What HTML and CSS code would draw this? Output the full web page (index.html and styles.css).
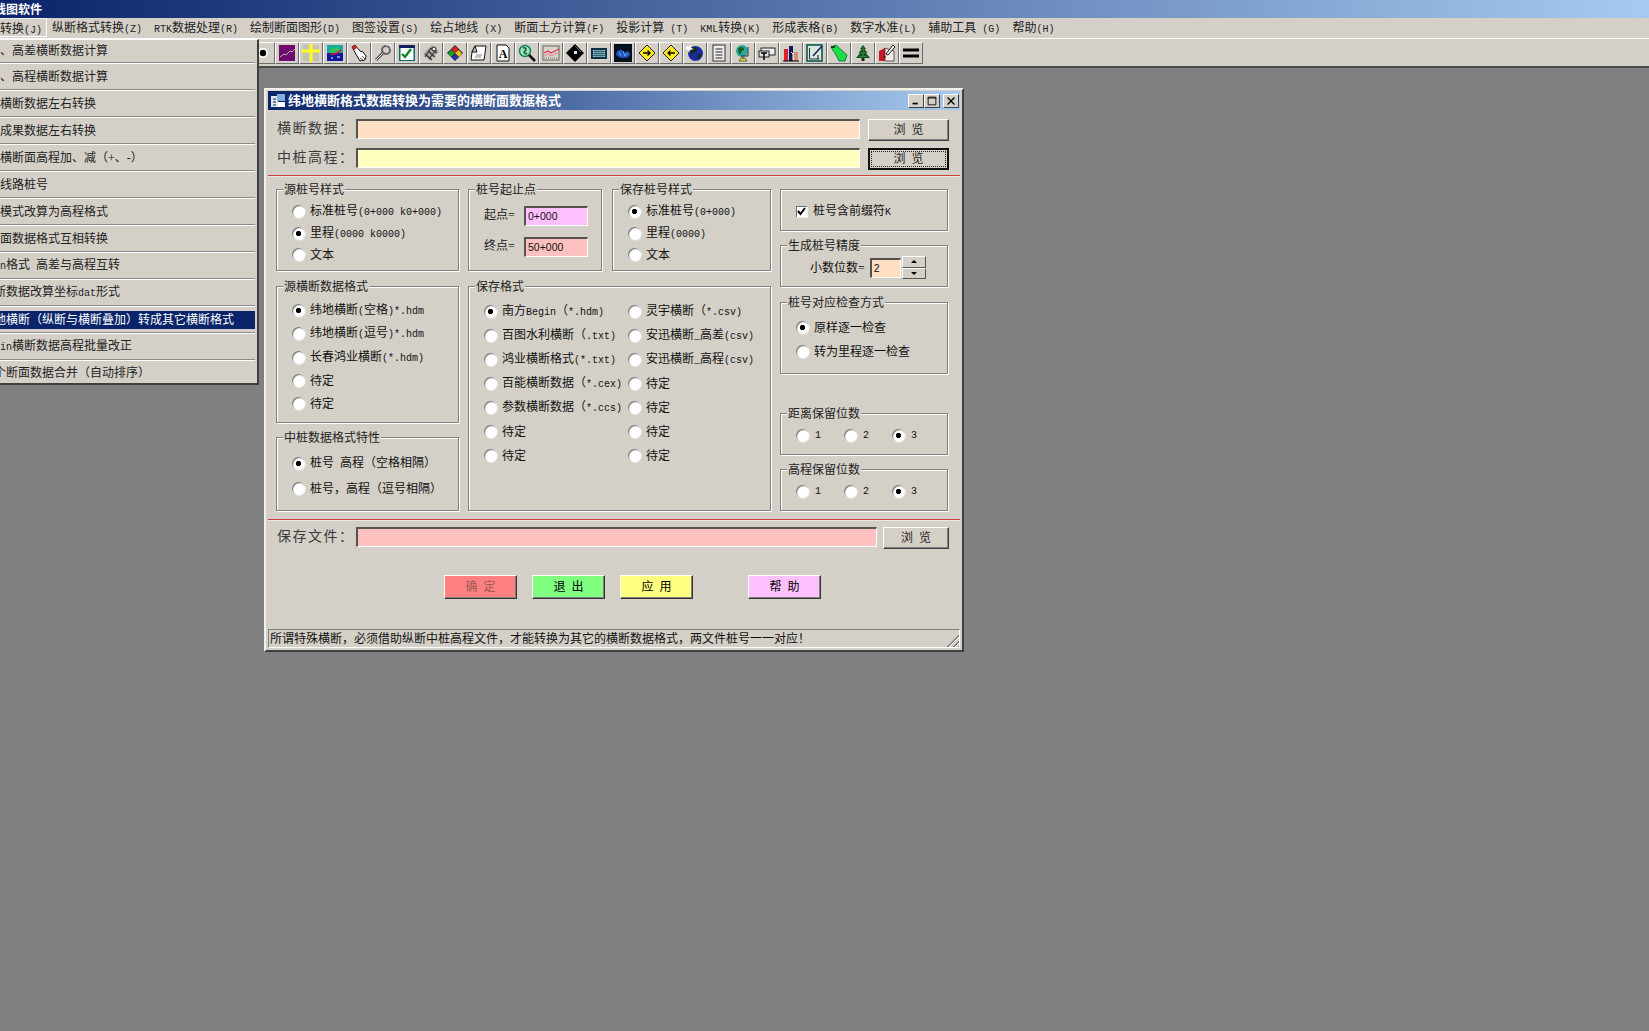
FILE: index.html
```html
<!DOCTYPE html>
<html lang="zh-CN">
<head>
<meta charset="utf-8">
<title>纬地横断格式数据转换</title>
<link rel="stylesheet" href="styles.css">
</head>
<body>
<div class="app">
  <div class="apptitle">线图软件</div>
  <nav class="menubar">
    <span class="menuitem open">转换<i>(J)</i></span>
    <span class="menuitem">纵断格式转换<i>(Z)</i></span>
    <span class="menuitem"><i>RTK</i>数据处理<i>(R)</i></span>
    <span class="menuitem">绘制断面图形<i>(D)</i></span>
    <span class="menuitem">图签设置<i>(S)</i></span>
    <span class="menuitem">绘占地线<i>&nbsp;(X)</i></span>
    <span class="menuitem">断面土方计算<i>(F)</i></span>
    <span class="menuitem">投影计算<i>&nbsp;(T)</i></span>
    <span class="menuitem"><i>KML</i>转换<i>(K)</i></span>
    <span class="menuitem">形成表格<i>(B)</i></span>
    <span class="menuitem">数字水准<i>(L)</i></span>
    <span class="menuitem">辅助工具<i>&nbsp;(G)</i></span>
    <span class="menuitem">帮助<i>(H)</i></span>
  </nav>
  <div class="toolbar">
    <span class="tool"><svg viewBox="0 0 18 18"><circle cx="9" cy="9" r="5" fill="#fff"/><circle cx="9" cy="9" r="3.2" fill="#000"/></svg></span>
    <span class="tool"><svg viewBox="0 0 18 18"><rect x="1" y="1" width="16" height="16" fill="#6e0a6e"/><path d="M2 13l4-3 2 1 4-4 2 1 3-3" fill="none" stroke="#b9b0b9" stroke-width="1"/></svg></span>
    <span class="tool"><svg viewBox="0 0 18 18"><rect x="1" y="1" width="16" height="16" fill="#c4c2b4"/><path d="M9 0v18M0 7h18" stroke="#ffff1e" stroke-width="3"/></svg></span>
    <span class="tool"><svg viewBox="0 0 18 18"><rect x="1" y="1" width="16" height="8" fill="#18a8a8"/><rect x="1" y="9" width="16" height="8" fill="#1018a0"/><path d="M3 6c4-4 9-4 12 0l-2 3H5z" fill="#30c060"/><path d="M4 10c4 1 8-1 11-4" fill="none" stroke="#e01030" stroke-width="1.6"/><path d="M5 14h2M11 13h3" stroke="#fff"/></svg></span>
    <span class="tool"><svg viewBox="0 0 18 18"><path d="M2 3l3-2 5 6 3 1 3 4-1 4-5 1-3-5z" fill="#fff" stroke="#111"/><path d="M2 3l3-2 2 3-3 2z" fill="#d02020"/><path d="M10 14l3 2M12 12l3 3" stroke="#555"/></svg></span>
    <span class="tool"><svg viewBox="0 0 18 18"><path d="M2 16l8-8" stroke="#555" stroke-width="3"/><path d="M2 16l8-8" stroke="#eee" stroke-width="1"/><circle cx="12" cy="6" r="4" fill="none" stroke="#666" stroke-width="2"/><path d="M12 1h5v4" fill="none" stroke="#eee"/></svg></span>
    <span class="tool"><svg viewBox="0 0 18 18"><rect x="1" y="1" width="16" height="16" fill="#0c6a60"/><rect x="2.500" y="4" width="13" height="12" fill="#fff"/><rect x="1" y="1" width="16" height="3" fill="#102060"/><path d="M4 10l3 3 6-8" fill="none" stroke="#0a8a20" stroke-width="2.400"/></svg></span>
    <span class="tool"><svg viewBox="0 0 18 18"><path d="M1 10l9-9 7 6-9 10z" fill="#a8a8a0"/><path d="M3 10l7 6M6 7l7 6M9 4l6 5M3 13l6-9M7 15l7-9" stroke="#333" stroke-width="1.100"/><circle cx="12" cy="5" r="2" fill="#eee" stroke="#222"/></svg></span>
    <span class="tool"><svg viewBox="0 0 18 18"><path d="M1 9l8-8 8 8-8 8z" fill="#222"/><path d="M9 2l3.500 3.500L9 9 5.500 5.500z" fill="#e02020"/><path d="M5 6l4 3-4 4-3-3.500z" fill="#18a028"/><path d="M13 6l3 3.500L13 13 9 9z" fill="#e8c020"/><path d="M9 10l3.500 3.500L9 16l-3-2.500z" fill="#2030c0"/></svg></span>
    <span class="tool"><svg viewBox="0 0 18 18"><path d="M5 2h11l-2 14H1l1-8z" fill="#fff" stroke="#111"/><path d="M5 2L2 8h5z" fill="#ccc" stroke="#111"/><path d="M6 11h6M5 13h6" stroke="#888"/></svg></span>
    <span class="tool"><svg viewBox="0 0 18 18"><path d="M3 1h9l3 3v13H3z" fill="#fff" stroke="#111"/><text x="9" y="14" class="glyph">A</text></svg></span>
    <span class="tool"><svg viewBox="0 0 18 18"><circle cx="7" cy="7" r="5.500" fill="#a8e8a0" stroke="#108070" stroke-width="1.500"/><path d="M5 4c3-1 4 2 2 3-2 1 0 4 2 2" fill="none" stroke="#0a5060" stroke-width="1.500"/><path d="M11 11l6 6" stroke="#111" stroke-width="2.500"/></svg></span>
    <span class="tool"><svg viewBox="0 0 18 18"><rect x="1" y="2" width="16" height="14" fill="#d8d4c8" stroke="#666"/><path d="M2 9l4-2 3 2 4-2 4-2" fill="none" stroke="#e03050" stroke-width="1.200"/><path d="M2 12l4-2 3 2 4-2 4-1" fill="none" stroke="#e080a0"/><path d="M2 14h14" stroke="#777" stroke-dasharray="1 1"/></svg></span>
    <span class="tool"><svg viewBox="0 0 18 18"><path d="M9 0l9 9-9 9-9-9z" fill="#000"/><path d="M8 7h3v3H8z" fill="#ddd"/><path d="M9 2l6 6" stroke="#666"/></svg></span>
    <span class="tool"><svg viewBox="0 0 18 18"><rect x="1" y="4" width="16" height="11" fill="#0e3044"/><rect x="3" y="6" width="12" height="7" fill="#a8dce0"/><path d="M3 7.500h12M3 9.500h12M3 11.500h12M5 6v7M7 6v7M9 6v7M11 6v7M13 6v7" stroke="#104050" stroke-width=".7"/></svg></span>
    <span class="tool"><svg viewBox="0 0 18 18"><rect x="0" y="0" width="18" height="18" fill="#04101c"/><path d="M2 10c1-4 4-5 6-4s2 4 4 2 3 0 4 2c-1 3-3 4-6 4S3 13 2 10z" fill="#2058c0"/><path d="M5 8l2 4M9 7l2 5M13 9l-2 3" stroke="#70a0f0"/></svg></span>
    <span class="tool"><svg viewBox="0 0 18 18"><path d="M9 1l8 8-8 8-8-8z" fill="#ffe820" stroke="#222"/><path d="M5 9h7M9.500 6.500L12 9l-2.500 2.500" fill="none" stroke="#000" stroke-width="1.300"/></svg></span>
    <span class="tool"><svg viewBox="0 0 18 18"><path d="M9 1l8 8-8 8-8-8z" fill="#ffe820" stroke="#222"/><path d="M13 9H6M8.500 6.500L6 9l2.500 2.500" fill="none" stroke="#000" stroke-width="1.300"/></svg></span>
    <span class="tool"><svg viewBox="0 0 18 18"><circle cx="9.500" cy="9.500" r="7.500" fill="#1a2ca0"/><path d="M7 3c3 0 5 2 4 4s-4 1-5 4c-2-1-3-6 1-8zM13 10c2-1 3 0 2 2s-3 3-4 2 0-3 2-4z" fill="#162a20"/><path d="M0 2l3 1 1-3 1 4 3 1-4 1-1 3-1-3-3-1z" fill="#fff"/></svg></span>
    <span class="tool"><svg viewBox="0 0 18 18"><rect x="3" y="1" width="12" height="16" fill="#eee" stroke="#333"/><path d="M5.500 5h7M5.500 8h7M5.500 11h7M5.500 14h7" stroke="#222"/></svg></span>
    <span class="tool"><svg viewBox="0 0 18 18"><circle cx="8" cy="7" r="6" fill="#28a8a0"/><path d="M4 5c2-3 6-2 6 0s-3 1-3 4-3 1-3-4z" fill="#1a5a20"/><path d="M14 3v9H7" fill="none" stroke="#333"/><path d="M9 13v2M5 17l2-3h4l2 3z" fill="#f0e020" stroke="#333" stroke-width=".7"/></svg></span>
    <span class="tool"><svg viewBox="0 0 18 18"><rect x="3" y="4" width="14" height="7" fill="#eee" stroke="#222"/><rect x="1" y="7" width="10" height="6" fill="#ddd" stroke="#222"/><path d="M3 9h6M6 9v7" stroke="#000" stroke-width="1.500"/></svg></span>
    <span class="tool"><svg viewBox="0 0 18 18"><rect x="2" y="5" width="4" height="12" fill="#d82030"/><rect x="7" y="2" width="4" height="15" fill="#101860"/><rect x="12" y="8" width="4" height="9" fill="#d88a70"/><path d="M1 17h16" stroke="#000"/><path d="M9 8l2 2v6" stroke="#fff"/></svg></span>
    <span class="tool"><svg viewBox="0 0 18 18"><rect x="1" y="1" width="15" height="16" fill="#d8e8e0" stroke="#0c5a50" stroke-width="1.600"/><path d="M3.500 4v11h10" fill="none" stroke="#333"/><path d="M7 12L16 2" stroke="#102060" stroke-width="1.500"/><path d="M12 11v4" stroke="#111"/></svg></span>
    <span class="tool"><svg viewBox="0 0 18 18"><path d="M1 3l5-2 11 10-2 6-6 0-3-6z" fill="#18e040" stroke="#064" stroke-width=".8"/><path d="M1 3l4 0" stroke="#111" stroke-width="1.500"/></svg></span>
    <span class="tool"><svg viewBox="0 0 18 18"><path d="M9 1l3 4h-1.500l3 4H12l4 5H2l4-5H4.500l3-4H6z" fill="#0e5020"/><path d="M9 3v10M6 8l3 2 3-2M5 12l4 1 4-1" stroke="#3a8a40" fill="none"/><rect x="7.500" y="14" width="3" height="3" fill="#222"/></svg></span>
    <span class="tool"><svg viewBox="0 0 18 18"><path d="M1 7l6-3v13H1z" fill="#c81828"/><path d="M7 4l9 3v10H7z" fill="#f4ece8" stroke="#222" stroke-width=".7"/><path d="M8 10l7-9 2 2-7 8z" fill="#fff" stroke="#111"/><path d="M5 13h3" stroke="#222"/></svg></span>
    <span class="tool"><svg viewBox="0 0 18 18"><path d="M1 6h16M1 12h16" stroke="#000" stroke-width="3"/></svg></span>
  </div>
  <main class="mdi"></main>
</div>

<div class="dropdown">
  <div class="ddrow"><span class="ddtext">、高差横断数据计算</span></div>
  <div class="ddrow"><span class="ddtext">、高程横断数据计算</span></div>
  <div class="ddrow"><span class="ddtext">横断数据左右转换</span></div>
  <div class="ddrow"><span class="ddtext">成果数据左右转换</span></div>
  <div class="ddrow"><span class="ddtext">横断面高程加、减（+、-）</span></div>
  <div class="ddrow"><span class="ddtext">线路桩号</span></div>
  <div class="ddrow"><span class="ddtext">模式改算为高程格式</span></div>
  <div class="ddrow"><span class="ddtext">面数据格式互相转换</span></div>
  <div class="ddrow"><span class="ddtext"><i>n</i>格式<i>&nbsp;</i>高差与高程互转</span></div>
  <div class="ddrow"><span class="ddtext shift">断数据改算坐标<i>dat</i>形式</span></div>
  <div class="ddrow active"><span class="ddtext"><b class="shift">地横断（纵断与横断叠加）转成其它横断格式</b></span></div>
  <div class="ddrow"><span class="ddtext"><i>in</i>横断数据高程批量改正</span></div>
  <div class="ddrow"><span class="ddtext shift">个断面数据合并（自动排序）</span></div>
</div>

<section class="dialog">
  <header class="dtitle">
    <svg class="dicon" viewBox="0 0 16 16"><rect x="1" y="3" width="7" height="11" fill="#dfe8f0"/><rect x="7" y="1" width="8" height="7" fill="#7fb0d8"/><rect x="8" y="9" width="7" height="5" fill="#fff"/><path d="M3 6h3M3 9h3M3 12h3" stroke="#123"/></svg>
    <span class="dtext">纬地横断格式数据转换为需要的横断面数据格式</span>
    <span class="capbtns">
      <span class="capbtn"><svg viewBox="0 0 16 14"><path d="M4 10h6" stroke="#000" stroke-width="2"/></svg></span>
      <span class="capbtn"><svg viewBox="0 0 16 14"><path d="M3.500 2.500h9v9h-9zM3 3.500h10" fill="none" stroke="#000"/></svg></span>
      <span class="capbtn closebtn"><svg viewBox="0 0 16 14"><path d="M4 3l8 8M12 3l-8 8" stroke="#000" stroke-width="1.600"/></svg></span>
    </span>
  </header>

  <div class="filerow first">
    <label class="flabel">横断数据：</label>
    <input class="field peach wide" type="text">
    <button class="btn browse">浏 览</button>
  </div>
  <div class="filerow second">
    <label class="flabel">中桩高程：</label>
    <input class="field lemon wide" type="text">
    <button class="btn browse focus"><span class="focusbox">浏 览</span></button>
  </div>
  <div class="redline top"></div>

  <div class="panels">
    <div class="col cola">
      <div class="group g82 rows22">
        <span class="legend">源桩号样式</span>
        <div class="opt"><span class="radio"></span><span>标准桩号<i>(0+000 k0+000)</i></span></div>
        <div class="opt"><span class="radio on"></span><span>里程<i>(0000 k0000)</i></span></div>
        <div class="opt"><span class="radio"></span><span>文本</span></div>
      </div>
      <div class="group g137 rows23">
        <span class="legend">源横断数据格式</span>
        <div class="opt"><span class="radio on"></span><span>纬地横断<i>(</i>空格<i>)*.hdm</i></span></div>
        <div class="opt"><span class="radio"></span><span>纬地横断<i>(</i>逗号<i>)*.hdm</i></span></div>
        <div class="opt"><span class="radio"></span><span>长春鸿业横断<i>(*.hdm)</i></span></div>
        <div class="opt"><span class="radio"></span><span>待定</span></div>
        <div class="opt"><span class="radio"></span><span>待定</span></div>
      </div>
      <div class="group g74 rows25">
        <span class="legend">中桩数据格式特性</span>
        <div class="opt"><span class="radio on"></span><span>桩号<i>&nbsp;</i>高程（空格相隔）</span></div>
        <div class="opt"><span class="radio"></span><span>桩号，高程（逗号相隔）</span></div>
      </div>
    </div>

    <div class="col colb">
      <div class="rowb">
        <div class="group g82 pointbox">
          <span class="legend">桩号起止点</span>
          <div class="pointrow"><span class="pointlabel">起点=</span><input class="field pink small" type="text" value="0+000"></div>
          <div class="pointrow"><span class="pointlabel">终点=</span><input class="field rose small" type="text" value="50+000"></div>
        </div>
        <div class="group g82 rows22 savestake">
          <span class="legend">保存桩号样式</span>
          <div class="opt"><span class="radio on"></span><span>标准桩号<i>(0+000)</i></span></div>
          <div class="opt"><span class="radio"></span><span>里程<i>(0000)</i></span></div>
          <div class="opt"><span class="radio"></span><span>文本</span></div>
        </div>
      </div>
      <div class="group saveformat">
        <span class="legend">保存格式</span>
        <div class="opt"><span class="radio on"></span><span>南方<i>Begin</i>（<i>*.hdm)</i></span></div>
        <div class="opt"><span class="radio"></span><span>灵宇横断（<i>*.csv)</i></span></div>
        <div class="opt"><span class="radio"></span><span>百图水利横断（<i>.txt)</i></span></div>
        <div class="opt"><span class="radio"></span><span>安迅横断<i>_</i>高差<i>(csv)</i></span></div>
        <div class="opt"><span class="radio"></span><span>鸿业横断格式<i>(*.txt)</i></span></div>
        <div class="opt"><span class="radio"></span><span>安迅横断<i>_</i>高程<i>(csv)</i></span></div>
        <div class="opt"><span class="radio"></span><span>百能横断数据（<i>*.cex)</i></span></div>
        <div class="opt"><span class="radio"></span><span>待定</span></div>
        <div class="opt"><span class="radio"></span><span>参数横断数据（<i>*.ccs)</i></span></div>
        <div class="opt"><span class="radio"></span><span>待定</span></div>
        <div class="opt"><span class="radio"></span><span>待定</span></div>
        <div class="opt"><span class="radio"></span><span>待定</span></div>
        <div class="opt"><span class="radio"></span><span>待定</span></div>
        <div class="opt"><span class="radio"></span><span>待定</span></div>
      </div>
    </div>

    <div class="col colc">
      <div class="group g42 checkgroup">
        <div class="opt"><span class="check"><svg viewBox="0 0 11 11"><path d="M2 5l2.500 3L9 2" fill="none" stroke="#000" stroke-width="2"/></svg></span><span>桩号含前缀符<i>K</i></span></div>
      </div>
      <div class="group g42 spingroup">
        <span class="legend">生成桩号精度</span>
        <div class="spinrow"><span>小数位数=</span><input class="field peach tiny" type="text" value="2">
          <span class="spin"><span class="spinbtn up"></span><span class="spinbtn down"></span></span>
        </div>
      </div>
      <div class="group g72 rows24">
        <span class="legend">桩号对应检查方式</span>
        <div class="opt"><span class="radio on"></span><span>原样逐一检查</span></div>
        <div class="opt"><span class="radio"></span><span>转为里程逐一检查</span></div>
      </div>
      <div class="group g42 digits">
        <span class="legend">距离保留位数</span>
        <div class="digitrow">
          <div class="opt"><span class="radio"></span><i>1</i></div>
          <div class="opt"><span class="radio"></span><i>2</i></div>
          <div class="opt"><span class="radio on"></span><i>3</i></div>
        </div>
      </div>
      <div class="group g42 digits">
        <span class="legend">高程保留位数</span>
        <div class="digitrow">
          <div class="opt"><span class="radio"></span><i>1</i></div>
          <div class="opt"><span class="radio"></span><i>2</i></div>
          <div class="opt"><span class="radio on"></span><i>3</i></div>
        </div>
      </div>
    </div>
  </div>

  <div class="redline bottom"></div>
  <div class="filerow save">
    <label class="flabel">保存文件：</label>
    <input class="field rose long" type="text">
    <button class="btn browse short">浏 览</button>
  </div>

  <div class="actions">
    <button class="btn action red" disabled>确 定</button>
    <button class="btn action green">退 出</button>
    <button class="btn action yellow">应 用</button>
    <button class="btn action violet">帮 助</button>
  </div>

  <footer class="status">所谓特殊横断，必须借助纵断中桩高程文件，才能转换为其它的横断数据格式，两文件桩号一一对应！<span class="grip"></span></footer>
</section>
</body>
</html>
```
FILE: styles.css
```css
* { box-sizing: border-box; }
html, body { height: 100%; }
body {
  margin: 0;
  overflow: hidden;
  background: #808080;
  color: #111;
  font: 12px/16px "Liberation Serif", "Noto Sans CJK SC", sans-serif;
}
i, b { font-style: normal; font-weight: normal; }
i { font-family: "Liberation Mono", monospace; font-size: 10px; }

.app { display: flex; flex-direction: column; height: 1031px; }
.apptitle {
  height: 18px;
  padding-left: 0;
  text-indent: -6px;
  background: linear-gradient(90deg, #0a246a, #a6caf0);
  color: #fff;
  font: bold 12px/17px "Noto Sans CJK SC", sans-serif;
  white-space: nowrap;
}
.menubar {
  display: flex;
  gap: 12px;
  height: 21px;
  padding-top: 2px;
  background: #d4d0c8;
  border-bottom: 1px solid #fff;
  line-height: 16px;
  color: #222;
  white-space: nowrap;
}
.menuitem.open {
  width: 47px;
  height: 19px;
  margin: -2px -7px 0 0;
  padding-top: 2px;
  border-right: 1px solid #fff;
  border-bottom: 1px solid #fff;
  border-top: 1px solid #eee;
}
.toolbar {
  display: flex;
  height: 29px;
  padding: 3px 0 0 251px;
  background: #d4d0c8;
  border-bottom: 2px solid #4c4c4c;
}
.tool {
  display: flex;
  align-items: center;
  justify-content: center;
  width: 24px;
  height: 22px;
  border: 1px solid;
  border-color: #fff #6c6c6c #6c6c6c #fff;
  background: #d4d0c8;
}
.tool svg { width: 18px; height: 18px; display: block; }
.glyph { font: bold 12px "Liberation Serif", serif; text-anchor: middle; fill: #000; }
.mdi { flex: 1; background: #808080; }

/* Drop-down menu lying over the toolbar */
.dropdown {
  position: absolute;
  left: 0;
  top: 39px;
  width: 259px;
  height: 346px;
  padding-right: 2px;
  background: #d4d0c8;
  border-right: 2px solid #404040;
  border-bottom: 2px solid #404040;
  border-top: 1px solid #fff;
  white-space: nowrap;
  overflow: hidden;
  color: #222;
}
.ddrow {
  display: flex;
  align-items: center;
  height: 27px;
  border-bottom: 1px solid #fff;
  box-shadow: inset 0 -1px 0 #8a8a8a;
}
.ddrow:first-child { height: 24px; padding-bottom: 2px; }
.ddrow:last-child { height: 23px; border: 0; box-shadow: none; }
.ddtext { display: block; flex: 1; line-height: 18px; }
.shift { margin-left: -6px; display: inline-block; }
.active .ddtext { background: #0a246a; color: #fff; }

/* Dialog window */
.dialog {
  position: absolute;
  left: 264px;
  top: 88px;
  width: 700px;
  height: 564px;
  display: flex;
  flex-direction: column;
  padding: 1px 2px 2px;
  background: #d4d0c8;
  border: 2px solid;
  border-color: #f2f0ea #404040 #404040 #f2f0ea;
}
.dtitle {
  display: flex;
  align-items: center;
  flex: none;
  height: 19px;
  padding: 0 1px 0 2px;
  background: linear-gradient(90deg, #0a246a, #a6caf0);
  color: #fff;
}
.dicon { width: 16px; height: 16px; flex: none; }
.dtext { margin: -2px 0 0 2px; font: bold 13px/18px "Noto Sans CJK SC", sans-serif; white-space: nowrap; }
.capbtns { display: flex; margin-left: auto; }
.capbtn {
  width: 16px;
  height: 14px;
  background: #d4d0c8;
  border: 1px solid;
  border-color: #fff #404040 #404040 #fff;
}
.capbtn svg { display: block; width: 100%; height: 100%; }
.closebtn { margin-left: 3px; }

.filerow { display: flex; flex: none; height: 22px; padding-left: 9px; }
.filerow.first { margin-top: 9px; }
.filerow.second { margin-top: 7px; }
.filerow.save { margin-top: 6px; }
.flabel {
  width: 79px;
  font: 14px/16px "Noto Sans CJK SC", sans-serif;
  letter-spacing: 1.500px;
  color: #3a3a3a;
  white-space: nowrap;
}
.field {
  display: block;
  height: 20px;
  padding: 0 0 1px 2px;
  border: 2px solid;
  border-width: 2px 1px 1px 2px;
  border-color: #55534e #fff #fff #55534e;
  border-radius: 0;
  outline: 0;
  font: 10.500px/15px "Liberation Sans", sans-serif;
  color: #111;
}
.wide { width: 504px; }
.long { width: 521px; }
.small { width: 64px; margin-left: auto; }
.tiny { width: 31px; margin-left: 5px; }
.peach { background: #ffe0c4; }
.lemon { background: #ffffc0; }
.pink { background: #ffc0ff; }
.rose { background: #ffc0c0; }

.btn {
  padding: 0;
  font: 12px/16px "Liberation Serif", "Noto Sans CJK SC", sans-serif;
  word-spacing: 3px;
  color: #222;
  background: #d4d0c8;
  border: 1px solid;
  border-color: #fff #404040 #404040 #fff;
  box-shadow: inset -1px -1px 0 #808080;
}
.browse { width: 81px; height: 22px; margin-left: 8px; }
.browse.short { width: 66px; margin-left: 6px; }
.browse.focus { border: 2px solid #111; height: 22px; box-shadow: none; }
.focusbox { display: block; height: 16px; margin: 0 1px; border: 1px dotted #222; line-height: 14px; }

.redline { flex: none; height: 2px; background: #c8403a; border-bottom: 1px solid #f0e6e0; }
.redline.top { margin-top: 5px; }
.redline.bottom { margin-top: 8px; }

.panels { display: flex; flex: none; gap: 9px; margin-top: 12px; padding-left: 8px; }
.col { display: flex; flex-direction: column; }
.cola { width: 183px; gap: 15px; }
.colb { width: 303px; gap: 15px; }
.colc { width: 168px; }
.rowb { display: flex; gap: 10px; }

.group {
  position: relative;
  border: 1px solid #808080;
  box-shadow: 1px 1px 0 #fff, inset 1px 1px 0 #fff;
  padding-left: 15px;
}
.legend {
  position: absolute;
  left: 6px;
  top: -8px;
  padding: 0 1px;
  background: #d4d0c8;
  line-height: 16px;
  color: #222;
  white-space: nowrap;
}
.opt { display: flex; align-items: center; padding-top: 1px; white-space: pre; }
.radio { margin: -1px 5px 0 0; }
.g82 { height: 82px; }
.g137 { height: 137px; }
.g74 { height: 74px; margin-top: -1px; }
.g42 { height: 42px; }
.g72 { height: 72px; }
.rows22 { padding-top: 11px; }
.rows22 .opt { height: 21.500px; }
.rows23 { padding-top: 12px; }
.rows23 .opt { height: 23.250px; }
.rows24 { padding-top: 12px; }
.rows24 .opt { height: 24px; }
.rows25 { padding-top: 13px; }
.rows25 .opt { height: 25px; }

.radio {
  flex: none;
  display: block;
  width: 13px;
  height: 13px;
  border-radius: 50%;
  background: #fff;
  box-shadow: inset 1px 1px 1px #6c6c6c, 0.500px 0.500px 1px #fff;
}
.radio.on { background: radial-gradient(circle, #000 2.300px, #fff 3px); }

.pointbox { width: 134px; padding: 16px 13px 0 15px; }
.pointrow { display: flex; align-items: center; height: 20px; color: #222; }
.pointrow + .pointrow { margin-top: 11px; }
.pointlabel { margin-top: -2px; }
.savestake { width: 159px; }
.saveformat {
  display: grid;
  grid-template-columns: 144px 1fr;
  grid-auto-rows: 24px;
  height: 225px;
  padding: 12px 0 0 15px;
}

.check {
  flex: none;
  width: 11px;
  height: 11px;
  margin-right: 6px;
  background: #fff;
  box-shadow: inset 1px 1px 0 #6c6c6c, 1px 1px 0 #eee;
}
.check svg { display: block; }
.checkgroup { padding: 10px 0 0 15px; }
.checkgroup .opt { height: 22px; }
.spingroup { margin-top: 14px; padding: 10px 0 0 29px; }
.spinrow { display: flex; align-items: center; height: 23px; }
.spin { display: flex; flex-direction: column; width: 24px; margin-left: 1px; }
.spinbtn {
  display: flex;
  align-items: center;
  justify-content: center;
  height: 11.500px;
  border: 1px solid;
  border-color: #fff #555 #555 #fff;
  background: #d4d0c8;
}
.spinbtn::after { content: ""; border: 3px solid transparent; }
.up::after { border-bottom-color: #000; border-top-width: 0; }
.down::after { border-top-color: #000; border-bottom-width: 0; }
.g72 { margin-top: 15px; }
.digits { padding-top: 10px; margin-top: 14px; }
.g72 + .digits { margin-top: 39px; }
.digitrow { display: flex; }
.digitrow .opt { width: 48px; height: 22px; }
.digitrow i { font-size: 10px; margin-left: 1px; }

.actions { display: flex; flex: none; gap: 15px; margin-top: 26px; padding-left: 176px; }
.action { width: 73px; height: 24px; border-color: #fff #333 #333 #fff; }
.action.violet { margin-left: 40px; }
.red { background: #ff8080; color: #a05a5a; }
.green { background: #80ff80; color: #000; }
.yellow { background: #ffff80; color: #000; }
.violet { background: #ffc0ff; color: #000; }

.status {
  position: relative;
  flex: none;
  height: 19px;
  margin-top: auto;
  padding-left: 1px;
  border: 1px solid;
  border-color: #808080 #fff #fff #808080;
  line-height: 18px;
  color: #111;
  white-space: nowrap;
}
.grip {
  position: absolute;
  right: 0;
  bottom: 0;
  width: 13px;
  height: 13px;
  background: repeating-linear-gradient(135deg, transparent 0 1.500px, #808080 1.500px 3px, #fff 3px 4px);
  clip-path: polygon(100% 0, 100% 100%, 0 100%);
}
```
